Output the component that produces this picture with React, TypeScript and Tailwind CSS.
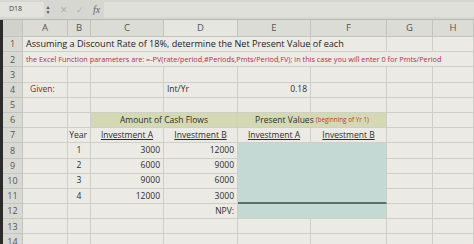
import type { ReactNode } from 'react';

const cols = 'grid grid-cols-[23px_45px_23px_73px_74px_73px_76px_46px_1fr]';
const line = 'border-r border-b border-[#cfcfca]';

function Cell({ children, className = '' }: { children?: ReactNode; className?: string }) {
  return <div className={`${line} flex h-full items-center overflow-visible whitespace-nowrap px-[3px] ${className}`}>{children}</div>;
}

function RowHead({ n }: { n: number }) {
  return (
    <div className="flex h-full items-center justify-center border-r border-b border-[#c4c4bf] bg-[#d9d9d4] pl-[3px] text-[9px] text-[#555]">
      {n}
    </div>
  );
}

function Row({ n, children }: { n: number; children?: ReactNode }) {
  return (
    <div className={`${cols} h-[15.2px]`}>
      <RowHead n={n} />
      {children}
    </div>
  );
}

function Blank({ count }: { count: number }) {
  return (
    <>
      {Array.from({ length: count }).map((_, i) => (
        <Cell key={i} />
      ))}
    </>
  );
}

const dataRows = [
  { n: 8, year: '1', a: '3000', b: '12000' },
  { n: 9, year: '2', a: '6000', b: '9000' },
  { n: 10, year: '3', a: '9000', b: '6000' },
  { n: 11, year: '4', a: '12000', b: '3000' }
];

export default function App() {
  return (
    <div className="relative h-[244px] w-[474px] overflow-hidden bg-[#ebeae4] font-['Open_Sans',sans-serif] text-[#2e2e2e]">
      {/* left dark edge of the screen */}
      <div className="absolute left-0 top-[20px] h-[224px] w-[3px] bg-[#2b2b2b]" />

      {/* formula bar */}
      <div className="flex h-[20px] items-center border-b border-[#b9b9b4] bg-[#d7d7d2]">
        <div className="flex h-[15px] w-[44px] items-center bg-[#e3e3de] pl-[9px] text-[7px] text-[#444]">D18</div>
        <div className="flex w-[8px] flex-col items-center text-[5px] leading-[5px] text-[#555]">
          <span>▲</span>
          <span>▼</span>
        </div>
        <div className="ml-[8px] flex items-center gap-[8px] text-[9px] text-[#b0b0ab]">
          <span>✕</span>
          <span>✓</span>
        </div>
        <span className="ml-[9px] font-['Liberation_Serif',serif] text-[10px] italic text-[#666]">fx</span>
        <div className="ml-[4px] h-[15px] flex-1 bg-[#e0e0db]" />
      </div>

      {/* column headers */}
      <div className={`${cols} h-[17px] bg-[#dcdcd7] text-[9.5px] text-[#555]`}>
        <div className="border-r border-b border-[#c4c4bf] bg-[#d2d2cd]" />
        {['A', 'B', 'C', 'D', 'E', 'F', 'G', 'H'].map((c) => (
          <div
            key={c}
            className={`flex items-center justify-center border-r border-b border-[#c4c4bf] ${c === 'D' ? 'bg-[#e6e6e1]' : ''}`}
          >
            {c}
          </div>
        ))}
      </div>

      <Row n={1}>
        <Cell className="col-span-5 text-[9.1px] text-[#222]">
          Assuming a Discount Rate of 18%, determine the Net Present Value of each
        </Cell>
        <Blank count={3} />
      </Row>
      <Row n={2}>
        <Cell className="col-span-8 text-[7.3px] text-[#b0304e]">
          the Excel Function parameters are: =-PV(rate/period,#Periods,Pmts/Period,FV); in this case you will enter 0 for Pmts/Period
        </Cell>
      </Row>
      <Row n={3}>
        <Blank count={8} />
      </Row>
      <Row n={4}>
        <Cell className="pl-[7px] text-[8.5px] text-[#8a1f2e]">Given:</Cell>
        <Blank count={2} />
        <Cell className="text-[8.5px]">Int/Yr</Cell>
        <Cell className="justify-end text-[8.5px]">0.18</Cell>
        <Blank count={3} />
      </Row>
      <Row n={5}>
        <Blank count={8} />
      </Row>
      <Row n={6}>
        <Blank count={2} />
        <Cell className="col-span-2 justify-center bg-[#d4d9b4] text-[8.5px]">Amount of Cash Flows</Cell>
        <Cell className="col-span-2 justify-center bg-[#d4d9b4] text-[8.5px]">
          Present Values
          <span className="ml-[2px] text-[6.3px] text-[#c0392b]">(beginning of Yr 1)</span>
        </Cell>
        <Blank count={2} />
      </Row>
      <Row n={7}>
        <Cell />
        <Cell className="justify-end text-[8.5px]">Year</Cell>
        <Cell className="justify-center text-[8.5px] underline underline-offset-1">Investment A</Cell>
        <Cell className="justify-center text-[8.5px] underline underline-offset-1">Investment B</Cell>
        <Cell className="justify-center text-[8.5px] underline underline-offset-1">Investment A</Cell>
        <Cell className="justify-center text-[8.5px] underline underline-offset-1">Investment B</Cell>
        <Blank count={2} />
      </Row>
      {dataRows.map((r) => (
        <Row key={r.n} n={r.n}>
          <Cell />
          <Cell className="justify-center text-[8.5px]">{r.year}</Cell>
          <Cell className="justify-end text-[8.5px]">{r.a}</Cell>
          <Cell className="justify-end text-[8.5px]">{r.b}</Cell>
          <div
            className={`col-span-2 h-full border-r border-[#cfcfca] bg-[#c4d9d3] ${
              r.n === 11 ? 'border-b-2 border-b-[#5c6f6b]' : ''
            }`}
          />
          <Blank count={2} />
        </Row>
      ))}
      <Row n={12}>
        <Blank count={3} />
        <Cell className="justify-end text-[8.5px]">NPV:</Cell>
        <div className="col-span-2 h-full border-r border-b border-[#cfcfca] bg-[#c4d9d3]" />
        <Blank count={2} />
      </Row>
      <Row n={13}>
        <Blank count={8} />
      </Row>
      <Row n={14}>
        <Blank count={8} />
      </Row>
    </div>
  );
}
